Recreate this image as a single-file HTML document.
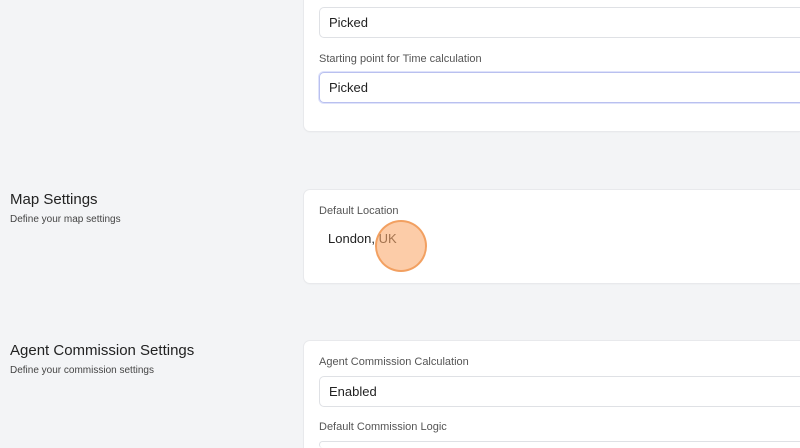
<!DOCTYPE html>
<html style="width:800px;height:448px;overflow:hidden"><head><style>
body{margin:0;width:800px;height:448px;overflow:hidden;background:#f3f4f6;font-family:"Liberation Sans",sans-serif;position:relative}
.card{position:absolute;left:304px;width:496px;background:#fff;border-radius:6px 0 0 6px;box-shadow:0 0 0 1px #e8e9ec,0 1px 2px rgba(0,0,0,.05)}
.in{position:absolute;left:319px;width:481px;height:29px;border:1px solid #dfe1e5;border-right:none;border-radius:5px 0 0 5px;background:#fff;font-size:13px;color:#222;line-height:29px;padding-left:9px;box-sizing:border-box}
.lb{position:absolute;left:319px;font-size:11px;color:#555}
.h{position:absolute;left:10px;font-size:15px;color:#222}
.s{position:absolute;left:10px;font-size:10px;color:#444}
</style></head><body>
<div class="card" style="top:0;height:131px;border-radius:0 0 0 6px"></div>
<div class="in" style="top:7px;height:31px">Picked</div>
<div class="lb" style="top:53px">Starting point for Time calculation</div>
<div class="in" style="top:72px;height:31px;border-color:#b9c0ef;box-shadow:0 0 0 1px #dfe3fb">Picked</div>
<div class="h" style="top:191px">Map Settings</div>
<div class="s" style="top:214px">Define your map settings</div>
<div class="card" style="top:190px;height:93px"></div>
<div class="lb" style="top:205px">Default Location</div>
<div style="position:absolute;left:328px;top:231px;font-size:13px;color:#222">London, UK</div>
<div style="position:absolute;left:375px;top:220px;width:48px;height:48px;border-radius:50%;background:rgba(250,170,110,.6);border:2px solid rgba(240,150,80,.8)"></div>
<div class="h" style="top:342px">Agent Commission Settings</div>
<div class="s" style="top:365px">Define your commission settings</div>
<div class="card" style="top:341px;height:107px;border-radius:6px 0 0 0"></div>
<div class="lb" style="top:356px">Agent Commission Calculation</div>
<div class="in" style="top:376px;height:31px">Enabled</div>
<div class="lb" style="top:421px">Default Commission Logic</div>
<div class="in" style="top:441px;height:7px;border-bottom:none"></div>
</body></html>
